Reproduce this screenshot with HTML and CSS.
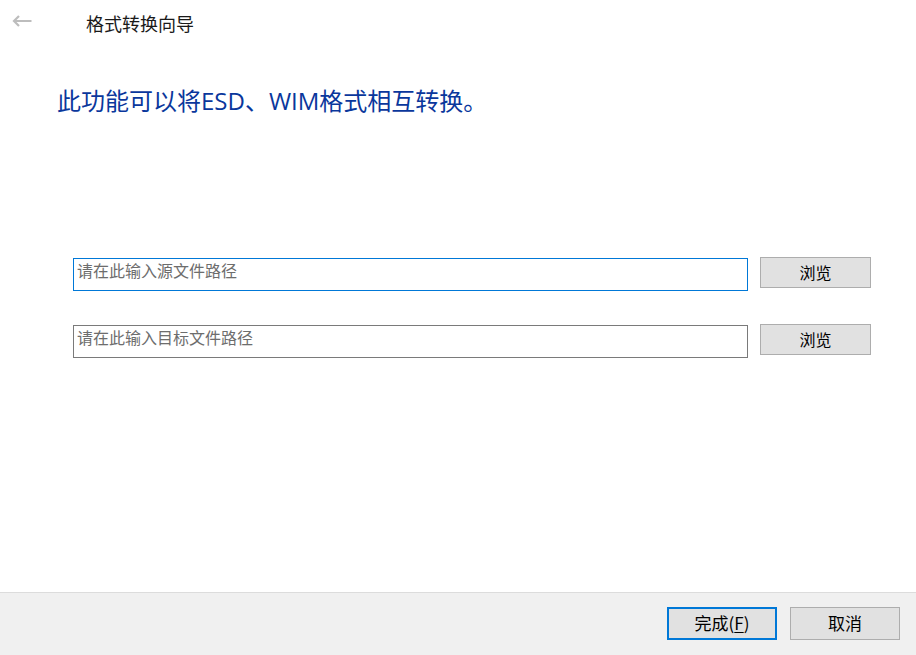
FILE: index.html
```html
<!DOCTYPE html>
<html lang="zh-CN">
<head>
<meta charset="utf-8">
<title>格式转换向导</title>
<link rel="stylesheet" href="styles.css">
</head>
<body>
<div class="window">
  <header class="titlebar">
    <svg class="back" width="20" height="12" viewBox="0 0 20 12" aria-hidden="true">
      <path d="M19.5 6 H2 M7 1 L2 6 L7 11" fill="none" stroke="#bdbdbd" stroke-width="2.2"/>
    </svg>
    <span class="title">格式转换向导</span>
  </header>
  <main class="content">
    <h1 class="heading">此功能可以将ESD、WIM格式相互转换。</h1>
    <div class="fields">
      <div class="row">
        <input class="path focused" type="text" placeholder="请在此输入源文件路径">
        <button class="browse">浏览</button>
      </div>
      <div class="row">
        <input class="path" type="text" placeholder="请在此输入目标文件路径">
        <button class="browse">浏览</button>
      </div>
    </div>
  </main>
  <footer class="footer">
    <button class="btn primary">完成(<u>F</u>)</button>
    <button class="btn">取消</button>
  </footer>
</div>
</body>
</html>
```

FILE: styles.css
```css
html, body {
  margin: 0;
  padding: 0;
  background: #ffffff;
}

body {
  font-family: "Noto Sans CJK SC", "Noto Sans", sans-serif;
  color: #000000;
}

.window {
  width: 916px;
  height: 655px;
  display: flex;
  flex-direction: column;
}

.titlebar {
  display: flex;
  align-items: flex-start;
  padding: 11px 0 0 12px;
  height: 35px;
}

.back {
  margin-top: 4px;
  flex: none;
}

.title {
  margin-left: 54px;
  font-size: 18px;
  line-height: 24px;
  color: #1a1a1a;
}

.content {
  flex: 1;
  padding: 39px 0 0 0;
}

.heading {
  margin: 0 0 0 57px;
  font-family: "Open Sans", "Noto Sans CJK SC", sans-serif;
  font-size: 24px;
  line-height: 32px;
  font-weight: normal;
  color: #0a379c;
}

.fields {
  margin: 141px 0 0 73px;
  display: flex;
  flex-direction: column;
  gap: 34px;
}

.row {
  display: flex;
  align-items: flex-start;
  gap: 12px;
}

.path {
  box-sizing: border-box;
  width: 675px;
  height: 33px;
  margin: 0;
  padding: 0 3px 9px 3px;
  border: 1px solid #7a7a7a;
  border-radius: 0;
  outline: none;
  font-family: inherit;
  font-size: 16px;
  color: #000;
  background: #fff;
}

.path.focused {
  border-color: #0078d7;
}

.path::placeholder {
  color: #6d6d6d;
  opacity: 1;
}

.browse {
  box-sizing: border-box;
  width: 111px;
  height: 31px;
  margin: -1px 0 0 0;
  padding: 0 0 2px 0;
  border: 1px solid #adadad;
  background: #e1e1e1;
  font-family: inherit;
  font-size: 16px;
  color: #000;
}

.footer {
  box-sizing: border-box;
  height: 63px;
  border-top: 1px solid #dcdcdc;
  background: #f0f0f0;
  display: flex;
  justify-content: flex-end;
  align-items: flex-start;
  gap: 13px;
  padding: 14px 16px 0 0;
}

.btn {
  box-sizing: border-box;
  width: 110px;
  height: 33px;
  margin: 0;
  padding: 0 0 2px 0;
  border: 1px solid #adadad;
  background: #e1e1e1;
  font-family: inherit;
  font-size: 17px;
  color: #000;
}

.btn.primary {
  border: 2px solid #0078d7;
}

.btn u {
  text-decoration: underline;
  text-underline-offset: 2px;
}
```
